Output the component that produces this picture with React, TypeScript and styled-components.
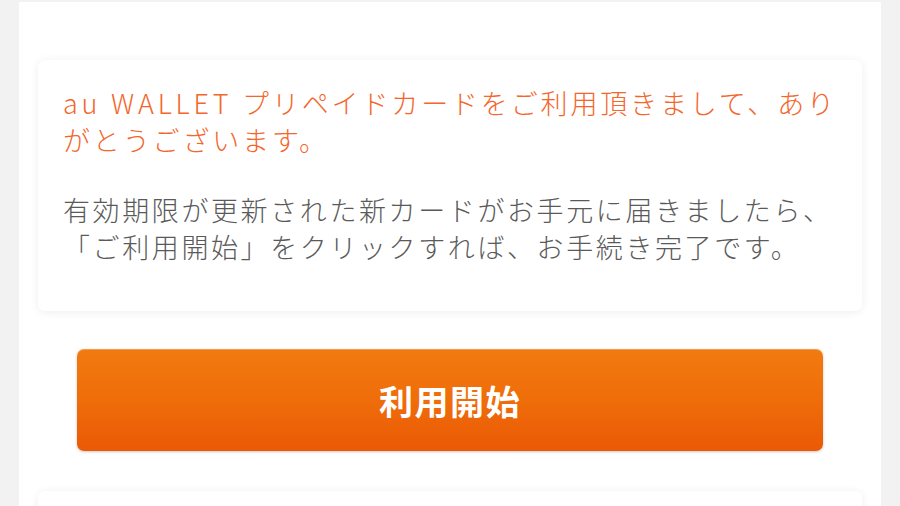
import React from "react";
import styled, { createGlobalStyle } from "styled-components";

const GlobalStyle = createGlobalStyle`
  html, body {
    margin: 0;
    padding: 0;
    background: #f2f2f2;
    overflow: hidden;
  }
  body {
    font-family: "Noto Sans CJK JP", "Noto Sans", sans-serif;
    -webkit-font-smoothing: antialiased;
  }
`;

const Page = styled.div({
  padding: "2px 19px 0 19px",
  height: "506px",
  boxSizing: "border-box",
});

const Panel = styled.main({
  background: "#ffffff",
  padding: "58px 19px 0 19px",
  minHeight: "700px",
});

const Card = styled.section({
  background: "#ffffff",
  borderRadius: "7px",
  boxShadow: "0 1px 10px rgba(0, 0, 0, 0.07)",
  padding: "24px 18px 46px 25px",
  display: "flex",
  flexDirection: "column",
  gap: "33px",
});

const Message = styled.p<{ $accent?: boolean }>`
  margin: 0;
  font-size: 27px;
  line-height: 37px;
  letter-spacing: ${(p) => (p.$accent ? "2.85px" : "2.6px")};
  font-weight: 300;
  color: ${(p) => (p.$accent ? "#f4662c" : "#5a5a5a")};
`;

const Brand = styled.span({
  letterSpacing: "3.8px",
});

const ButtonRow = styled.div({
  padding: "38px 39px 40px 39px",
});

const StartButton = styled.button({
  display: "flex",
  alignItems: "center",
  justifyContent: "center",
  width: "100%",
  height: "102px",
  border: "none",
  borderRadius: "7px",
  background: "linear-gradient(to bottom, #f27a0f 0%, #ef6d0a 50%, #eb5905 100%)",
  boxShadow:
    "inset 0 1px 0 rgba(255, 255, 255, 0.25), 0 1px 3px rgba(0, 0, 0, 0.22)",
  color: "#ffffff",
  fontFamily: '"Noto Sans CJK JP", "Noto Sans", sans-serif',
  fontSize: "34px",
  fontWeight: 700,
  letterSpacing: "1.5px",
  cursor: "pointer",
});

const NextCard = styled.section({
  background: "#ffffff",
  borderRadius: "7px",
  boxShadow: "0 1px 10px rgba(0, 0, 0, 0.07)",
  height: "200px",
});

const App = () => {
  return (
    <>
      <GlobalStyle />
      <Page>
        <Panel>
          <Card>
            <Message $accent>
              <Brand>au WALLET </Brand>プリペイドカードをご利用頂きまして、あり
              <br />
              がとうございます。
            </Message>
            <Message>
              有効期限が更新された新カードがお手元に届きましたら、
              <br />
              「ご利用開始」をクリックすれば、お手続き完了です。
            </Message>
          </Card>
          <ButtonRow>
            <StartButton type="button">利用開始</StartButton>
          </ButtonRow>
          <NextCard />
        </Panel>
      </Page>
    </>
  );
};

export default App;
